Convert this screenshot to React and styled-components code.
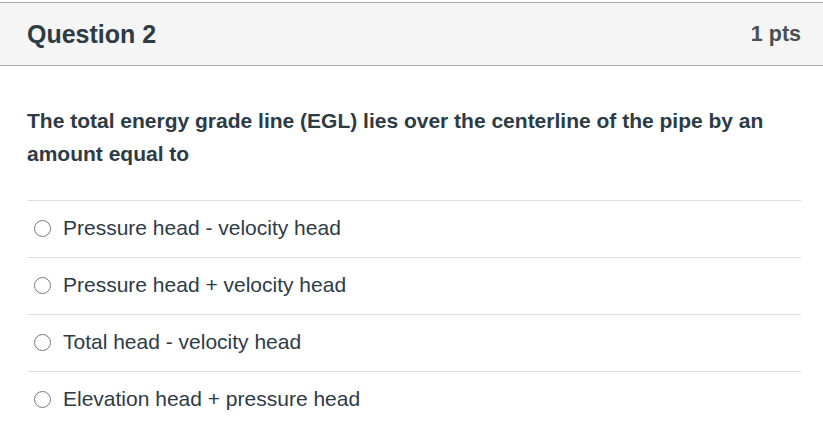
import React from "react";
import styled, { createGlobalStyle } from "styled-components";

const GlobalStyle = createGlobalStyle`
  body {
    margin: 0;
    background: #fff;
    font-family: "Liberation Sans", Arial, sans-serif;
    color: #2d3b45;
  }
`;

const Card = styled.div`
  margin-top: 2px;
  border-top: 1px solid #aaaaaa;
`;

const Header = styled.header`
  display: flex;
  align-items: center;
  justify-content: space-between;
  height: 62px;
  padding: 0 22px 0 27px;
  background: #f5f5f5;
  border-bottom: 1px solid #aaaaaa;
`;

const Title = styled.h2`
  margin: 0;
  font-size: 25px;
  font-weight: bold;
  color: #2d3b45;
`;

const Points = styled.span`
  font-size: 21.5px;
  font-weight: bold;
  color: #4a4f52;
`;

const Body = styled.section`
  padding: 38px 22px 0 27px;
`;

const QuestionText = styled.p`
  margin: 0 0 30px;
  font-size: 21px;
  font-weight: bold;
  line-height: 33px;
  color: #2d3b45;
`;

const Answers = styled.div`
  display: flex;
  flex-direction: column;
`;

const Answer = styled.label`
  display: flex;
  align-items: center;
  gap: 12px;
  height: 54px;
  padding: 0 0 2px 7px;
  border-top: 1px solid #dcdfe1;
  font-size: 21px;
  color: #2d3b45;
  cursor: pointer;
`;

const Radio = styled.span`
  flex: none;
  box-sizing: border-box;
  width: 17px;
  height: 17px;
  border: 1.5px solid #74787c;
  border-radius: 50%;
  background: #fff;
`;

const options = [
  "Pressure head - velocity head",
  "Pressure head + velocity head",
  "Total head - velocity head",
  "Elevation head + pressure head",
];

export default function App() {
  return (
    <>
      <GlobalStyle />
      <Card>
        <Header>
          <Title>Question 2</Title>
          <Points>1 pts</Points>
        </Header>
        <Body>
          <QuestionText>
            The total energy grade line (EGL) lies over the centerline of the
            pipe by an amount equal to
          </QuestionText>
          <Answers>
            {options.map((o) => (
              <Answer key={o}>
                <Radio />
                {o}
              </Answer>
            ))}
          </Answers>
        </Body>
      </Card>
    </>
  );
}
